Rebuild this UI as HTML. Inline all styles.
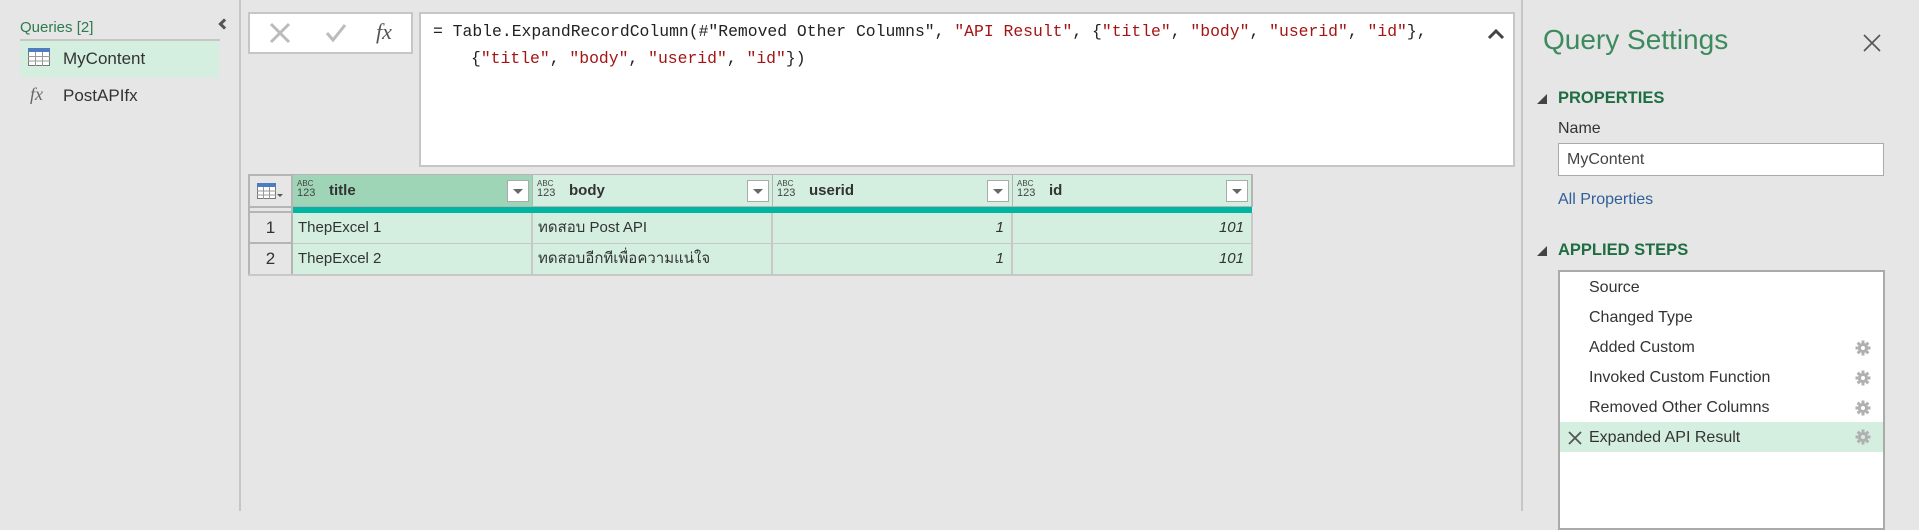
<!DOCTYPE html>
<html><head><meta charset="utf-8"><style>
*{margin:0;padding:0;box-sizing:border-box}
body{width:1919px;height:511px;background:#e6e6e6;position:relative;overflow:hidden;font-family:"Liberation Sans","DejaVu Sans",sans-serif;color:#333}
.a{position:absolute}
.mono{font-family:"Liberation Mono","DejaVu Sans Mono",monospace;font-size:16.4px;color:#222;white-space:pre}
.s{color:#a31515}
.hd{position:absolute;top:174px;height:33px;background:#d4efe0;border:1px solid #b5b5b5;border-left:none}
.hd b{position:absolute;left:36px;top:7px;font-size:15px;color:#333}
.abc{position:absolute;left:4px;top:5px;font-size:8px;line-height:8px;color:#444}
.abc span{font-size:11px;line-height:11px;display:block}
.dd{position:absolute;right:3px;top:5px;width:22px;height:22px;background:#fff;border:1px solid #aaa}
.dd:after{content:"";position:absolute;left:5px;top:8px;border-left:5px solid transparent;border-right:5px solid transparent;border-top:5px solid #666}
.cell{position:absolute;height:30px;background:#d4efe0;border-right:2px solid #c8c8c8;font-size:15px;line-height:30px;padding:0 5px;white-space:nowrap}
.num{text-align:right;font-style:italic;padding-right:7px}
.idx{position:absolute;left:248px;width:45px;height:31px;border:2px solid #b5b5b5;border-top:none;background:#e6e6e6;text-align:center;font-size:17px;line-height:30px}
.step{position:absolute;left:1589px;font-size:16px;color:#333}
.gear{position:absolute;left:1855px}
</style></head><body>
<div class="a" style="left:20px;top:19px;font-size:15px;color:#2d7a4f">Queries [2]</div>
<div class="a" style="left:220px;top:20px;width:8px;height:8px;border-left:3px solid #555;border-bottom:3px solid #555;transform:rotate(45deg)"></div>
<div class="a" style="left:20px;top:39px;width:200px;height:2px;background:#c6c6c6"></div>
<div class="a" style="left:20px;top:41px;width:199px;height:36px;background:#d4efe0"></div>
<svg class="a" style="left:28px;top:48px" width="22" height="18"><rect x="0.5" y="0.5" width="21" height="17" fill="#fff" stroke="#777"/><rect x="0" y="0" width="22" height="4" fill="#4f7cbf"/><path d="M0 8.5H22M0 13H22M7.5 4V18M14.5 4V18" stroke="#999"/></svg>
<div class="a" style="left:63px;top:49px;font-size:17px;color:#333">MyContent</div>
<div class="a" style="left:30px;top:84px;font-size:18px;font-style:italic;font-family:'Liberation Serif',serif;color:#666">fx</div>
<div class="a" style="left:63px;top:86px;font-size:17px;color:#333">PostAPIfx</div>
<div class="a" style="left:239px;top:0;width:2px;height:511px;background:#c6c6c6"></div>
<div class="a" style="left:248px;top:12px;width:165px;height:42px;background:#fff;border:2px solid #c6c6c6"></div>
<svg class="a" style="left:268px;top:22px" width="24" height="22"><path d="M3 2L21 20M21 2L3 20" stroke="#bbb" stroke-width="3"/></svg>
<svg class="a" style="left:324px;top:22px" width="24" height="22"><path d="M3 11L9 18L21 3" stroke="#bbb" stroke-width="3" fill="none"/></svg>
<div class="a" style="left:376px;top:19px;font-size:22px;font-style:italic;font-family:'Liberation Serif',serif;color:#555">fx</div>
<div class="a" style="left:419px;top:12px;width:1096px;height:155px;background:#fff;border:2px solid #c6c6c6"></div>
<div class="a mono" style="left:433px;top:22px">= Table.ExpandRecordColumn(#"Removed Other Columns", <span class="s">"API Result"</span>, {<span class="s">"title"</span>, <span class="s">"body"</span>, <span class="s">"userid"</span>, <span class="s">"id"</span>},</div>
<div class="a mono" style="left:471px;top:49px">{<span class="s">"title"</span>, <span class="s">"body"</span>, <span class="s">"userid"</span>, <span class="s">"id"</span>})</div>
<svg class="a" style="left:1487px;top:28px" width="18" height="12"><path d="M2 10L9 3L16 10" stroke="#444" stroke-width="3" fill="none"/></svg>
<div class="a" style="left:248px;top:174px;width:45px;height:34px;background:#e6e6e6;border:2px solid #b5b5b5"></div>
<svg class="a" style="left:257px;top:183px" width="26" height="17"><rect x="0.5" y="0.5" width="18" height="15" fill="#fff" stroke="#777"/><rect width="19" height="4" fill="#4f7cbf"/><path d="M0 8H19M0 12H19M6.5 4V16M12.5 4V16" stroke="#999"/><path d="M20 11h6l-3 3z" fill="#555"/></svg>
<div class="hd" style="left:293px;width:240px;background:#9fd5b7"><div class="abc">ABC<span>123</span></div><b>title</b><div class="dd"></div></div>
<div class="hd" style="left:533px;width:240px"><div class="abc">ABC<span>123</span></div><b>body</b><div class="dd"></div></div>
<div class="hd" style="left:773px;width:240px"><div class="abc">ABC<span>123</span></div><b>userid</b><div class="dd"></div></div>
<div class="hd" style="left:1013px;width:240px;border-right:2px solid #b5b5b5"><div class="abc">ABC<span>123</span></div><b>id</b><div class="dd"></div></div>
<div class="a" style="left:248px;top:207px;width:45px;height:6px;border:2px solid #b5b5b5;border-top:none"></div>
<div class="a" style="left:293px;top:207px;width:959px;height:6px;background:#00b5a2"></div>
<div class="idx" style="top:213px">1</div>
<div class="idx" style="top:244px;height:32px">2</div>
<div class="cell" style="left:293px;top:213px;width:240px">ThepExcel 1</div>
<div class="cell" style="left:533px;top:213px;width:240px">ทดสอบ Post API</div>
<div class="cell num" style="left:773px;top:213px;width:240px">1</div>
<div class="cell num" style="left:1013px;top:213px;width:240px">101</div>
<div class="a" style="left:293px;top:243px;width:960px;height:1px;background:#c8c8c8"></div>
<div class="cell" style="left:293px;top:244px;width:240px">ThepExcel 2</div>
<div class="cell" style="left:533px;top:244px;width:240px">ทดสอบอีกทีเพื่อความแน่ใจ</div>
<div class="cell num" style="left:773px;top:244px;width:240px">1</div>
<div class="cell num" style="left:1013px;top:244px;width:240px">101</div>
<div class="a" style="left:248px;top:274px;width:1005px;height:2px;background:#c8c8c8"></div>
<div class="a" style="left:1521px;top:0;width:2px;height:511px;background:#c6c6c6"></div>
<div class="a" style="left:1543px;top:24px;font-size:28px;color:#3d8a5e">Query Settings</div>
<svg class="a" style="left:1863px;top:34px" width="18" height="18"><path d="M1 1L17 17M17 1L1 17" stroke="#555" stroke-width="1.6"/></svg>
<svg class="a" style="left:1537px;top:94px" width="10" height="10"><path d="M10 0V10H0Z" fill="#444"/></svg>
<div class="a" style="left:1558px;top:89px;font-size:16.5px;font-weight:bold;color:#1f6e43">PROPERTIES</div>
<div class="a" style="left:1558px;top:120px;font-size:16px">Name</div>
<div class="a" style="left:1558px;top:143px;width:326px;height:33px;background:#fff;border:1px solid #aaa;font-size:16px;padding:7px 0 0 8px;color:#444">MyContent</div>
<div class="a" style="left:1558px;top:191px;font-size:16px;color:#2f5f9a">All Properties</div>
<svg class="a" style="left:1537px;top:246px" width="10" height="10"><path d="M10 0V10H0Z" fill="#444"/></svg>
<div class="a" style="left:1558px;top:241px;font-size:16.5px;font-weight:bold;color:#1f6e43">APPLIED STEPS</div>
<div class="a" style="left:1558px;top:270px;width:327px;height:260px;background:#fff;border:2px solid #aaa"></div>
<div class="a" style="left:1560px;top:422px;width:323px;height:30px;background:#d4efe0"></div>
<div class="step" style="top:279px">Source</div>
<div class="step" style="top:309px">Changed Type</div>
<div class="step" style="top:339px">Added Custom</div>
<div class="step" style="top:369px">Invoked Custom Function</div>
<div class="step" style="top:399px">Removed Other Columns</div>
<div class="step" style="top:429px">Expanded API Result</div>
<svg class="a" style="left:1568px;top:431px" width="14" height="14"><path d="M1 1L13 13M13 1L1 13" stroke="#555" stroke-width="1.8"/></svg>
<svg class="gear" style="top:340px" width="16" height="16" viewBox="0 0 16 16"><g fill="#b0b0b0"><circle cx="8" cy="8" r="5"/><rect x="6.5" y="0.5" width="3" height="15"/><rect x="0.5" y="6.5" width="15" height="3"/><rect x="6.5" y="0.5" width="3" height="15" transform="rotate(45 8 8)"/><rect x="6.5" y="0.5" width="3" height="15" transform="rotate(-45 8 8)"/></g><circle cx="8" cy="8" r="2" fill="#fff"/></svg>
<svg class="gear" style="top:370px" width="16" height="16" viewBox="0 0 16 16"><g fill="#b0b0b0"><circle cx="8" cy="8" r="5"/><rect x="6.5" y="0.5" width="3" height="15"/><rect x="0.5" y="6.5" width="15" height="3"/><rect x="6.5" y="0.5" width="3" height="15" transform="rotate(45 8 8)"/><rect x="6.5" y="0.5" width="3" height="15" transform="rotate(-45 8 8)"/></g><circle cx="8" cy="8" r="2" fill="#fff"/></svg>
<svg class="gear" style="top:400px" width="16" height="16" viewBox="0 0 16 16"><g fill="#b0b0b0"><circle cx="8" cy="8" r="5"/><rect x="6.5" y="0.5" width="3" height="15"/><rect x="0.5" y="6.5" width="15" height="3"/><rect x="6.5" y="0.5" width="3" height="15" transform="rotate(45 8 8)"/><rect x="6.5" y="0.5" width="3" height="15" transform="rotate(-45 8 8)"/></g><circle cx="8" cy="8" r="2" fill="#fff"/></svg>
<svg class="gear" style="top:429px" width="16" height="16" viewBox="0 0 16 16"><g fill="#b0b0b0"><circle cx="8" cy="8" r="5"/><rect x="6.5" y="0.5" width="3" height="15"/><rect x="0.5" y="6.5" width="15" height="3"/><rect x="6.5" y="0.5" width="3" height="15" transform="rotate(45 8 8)"/><rect x="6.5" y="0.5" width="3" height="15" transform="rotate(-45 8 8)"/></g><circle cx="8" cy="8" r="2" fill="#d4efe0"/></svg>
</body></html>
